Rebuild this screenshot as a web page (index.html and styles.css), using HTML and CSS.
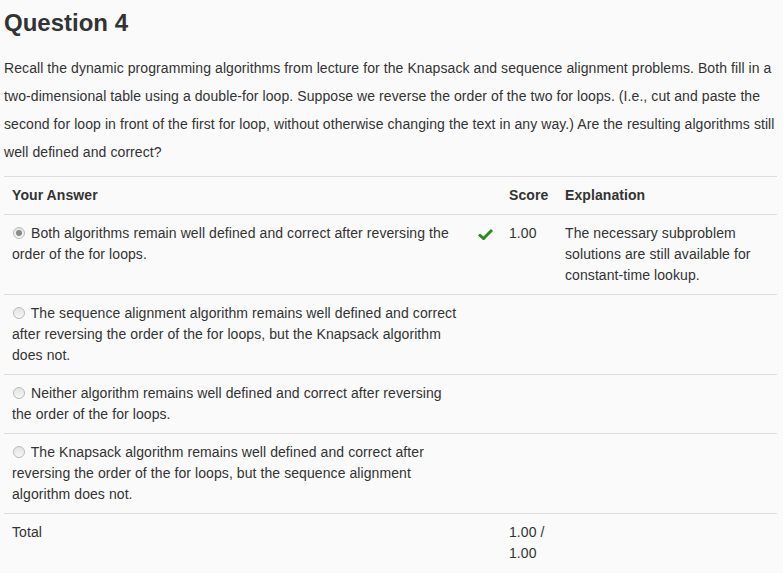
FILE: index.html
```html
<!DOCTYPE html>
<html lang="en">
<head>
    <meta charset="UTF-8">
    <title>Question 4</title>
    <link rel="stylesheet" href="styles.css">
</head>
<body>
    <div class="question">
        <h3 class="title">Question 4</h3>
        <p class="prompt">Recall the dynamic programming algorithms from lecture for the Knapsack and sequence alignment problems. Both fill in a two-dimensional table using a double-for loop. Suppose we reverse the order of the two for loops. (I.e., cut and paste the second for loop in front of the first for loop, without otherwise changing the text in any way.) Are the resulting algorithms still well defined and correct?</p>
        <table class="answers">
            <colgroup>
                <col class="c-answer">
                <col class="c-mark">
                <col class="c-score">
                <col class="c-expl">
            </colgroup>
            <thead>
                <tr>
                    <th>Your Answer</th>
                    <th></th>
                    <th>Score</th>
                    <th>Explanation</th>
                </tr>
            </thead>
            <tbody>
                <tr>
                    <td><span class="radio checked"></span> Both algorithms remain well defined and correct after reversing the order of the for loops.</td>
                    <td class="mark">
                        <svg width="15" height="12" viewBox="0 0 15 12"><path d="M1 6.5 L5.5 10.5 L14 2" fill="none" stroke="#2b8a1f" stroke-width="3"/></svg>
                    </td>
                    <td>1.00</td>
                    <td>The necessary subproblem solutions are still available for constant-time lookup.</td>
                </tr>
                <tr>
                    <td><span class="radio"></span> The sequence alignment algorithm remains well defined and correct after reversing the order of the for loops, but the Knapsack algorithm does not.</td>
                    <td></td>
                    <td></td>
                    <td></td>
                </tr>
                <tr>
                    <td><span class="radio"></span> Neither algorithm remains well defined and correct after reversing the order of the for loops.</td>
                    <td></td>
                    <td></td>
                    <td></td>
                </tr>
                <tr>
                    <td><span class="radio"></span> The Knapsack algorithm remains well defined and correct after reversing the order of the for loops, but the sequence alignment algorithm does not.</td>
                    <td></td>
                    <td></td>
                    <td></td>
                </tr>
            </tbody>
            <tfoot>
                <tr>
                    <td>Total</td>
                    <td></td>
                    <td>1.00 / 1.00</td>
                    <td></td>
                </tr>
            </tfoot>
        </table>
    </div>
</body>
</html>
```

FILE: styles.css
```css
body {
    margin: 0;
    background-color: #fafafa;
    color: #333;
    font-family: "Liberation Sans", Arial, sans-serif;
    font-size: 14px;
    letter-spacing: 0.08px;
}
.question {
    padding: 0 6px 0 4px;
}
.title {
    margin: 0;
    padding-top: 8px;
    font-size: 24px;
    line-height: 30px;
    font-weight: bold;
    letter-spacing: 0;
}
.prompt {
    margin: 16px 0 10px;
    line-height: 28px;
}
.answers {
    width: 100%;
    border-collapse: collapse;
    table-layout: fixed;
}
.c-answer { width: 466px; }
.c-mark   { width: 31px; }
.c-score  { width: 56px; }
.answers th,
.answers td {
    padding: 8px;
    line-height: 21px;
    text-align: left;
    vertical-align: top;
    border-top: 1px solid #ddd;
}
.answers th {
    font-weight: bold;
}
.answers thead th {
    border-bottom: 1px solid #ddd;
}
.mark svg {
    display: block;
    margin-top: 5px;
}
.radio {
    display: inline-block;
    width: 10px;
    height: 10px;
    border: 1px solid #bbb;
    border-radius: 50%;
    background: linear-gradient(#e4e4e4, #f6f6f6);
    vertical-align: -1px;
    margin: 0 2px 0 1px;
    position: relative;
}
.radio.checked::after {
    content: "";
    position: absolute;
    left: 2px;
    top: 2px;
    width: 6px;
    height: 6px;
    border-radius: 50%;
    background: #8a8a8a;
}
```
